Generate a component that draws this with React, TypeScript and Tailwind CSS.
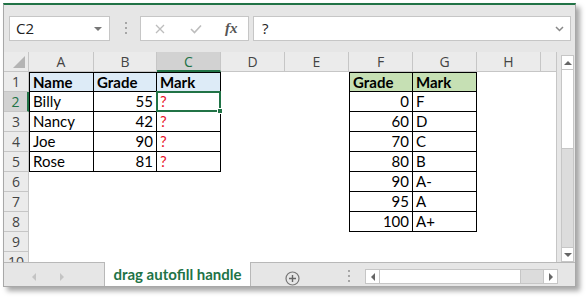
import React from 'react';

const cols = ['A', 'B', 'C', 'D', 'E', 'F', 'G', 'H', ''];

type Cell = { t: string; right?: boolean; bold?: boolean; bg?: string; red?: boolean };

const data: Record<string, Cell> = {
  A1: { t: 'Name', bold: true, bg: 'bg-[#ddebf7]' },
  B1: { t: 'Grade', bold: true, bg: 'bg-[#ddebf7]' },
  C1: { t: 'Mark', bold: true, bg: 'bg-[#ddebf7]' },
  A2: { t: 'Billy' }, B2: { t: '55', right: true }, C2: { t: '?', red: true },
  A3: { t: 'Nancy' }, B3: { t: '42', right: true }, C3: { t: '?', red: true },
  A4: { t: 'Joe' }, B4: { t: '90', right: true }, C4: { t: '?', red: true },
  A5: { t: 'Rose' }, B5: { t: '81', right: true }, C5: { t: '?', red: true },
  F1: { t: 'Grade', bold: true, bg: 'bg-[#c6e0b4]' },
  G1: { t: 'Mark', bold: true, bg: 'bg-[#c6e0b4]' },
  F2: { t: '0', right: true }, G2: { t: 'F' },
  F3: { t: '60', right: true }, G3: { t: 'D' },
  F4: { t: '70', right: true }, G4: { t: 'C' },
  F5: { t: '80', right: true }, G5: { t: 'B' },
  F6: { t: '90', right: true }, G6: { t: 'A-' },
  F7: { t: '95', right: true }, G7: { t: 'A' },
  F8: { t: '100', right: true }, G8: { t: 'A+' },
};

// cells inside a bordered block, and which edges need their own line
function blockBorders(col: string, row: number): string {
  const inLeft = ['A', 'B', 'C'].includes(col) && row <= 5;
  const inRight = ['F', 'G'].includes(col) && row <= 8;
  if (!inLeft && !inRight) return '';
  let c = 'border-black border-r border-b';
  if (row === 1) c += ' border-t';
  if (col === 'A' || col === 'F') c += ' border-l';
  return c;
}

function Grid() {
  const rows = [1, 2, 3, 4, 5, 6, 7, 8, 9, 10];
  return (
    <div className="grid w-[553px] grid-cols-[25px_65px_63px_64px_64px_64px_64px_64px_64px_16px] auto-rows-[20px] overflow-hidden h-[210px] font-['Lato',sans-serif] text-[15px]">
      {/* header row */}
      <div className="relative bg-[#ebebeb] border-r border-b border-[#c6c6c6]">
        <div className="absolute right-[3px] bottom-[3px] w-0 h-0 border-l-[12px] border-l-transparent border-b-[12px] border-b-[#b4b4b4]" />
      </div>
      {cols.map((c, i) => (
        <div
          key={'h' + i}
          className={
            c === 'C'
              ? 'flex items-center justify-center bg-[#d2d2d2] border-r border-[#c6c6c6] border-b-2 border-b-[#217346] text-[#217346] font-["Open_Sans",sans-serif] text-[14px]'
              : 'flex items-center justify-center bg-[#ebebeb] border-r border-b border-[#c6c6c6] text-[#444] font-["Open_Sans",sans-serif] text-[14px]'
          }
        >
          {c}
        </div>
      ))}
      {rows.map((r) => (
        <React.Fragment key={r}>
          <div
            className={
              r === 2
                ? 'flex items-center justify-center bg-[#d2d2d2] border-b border-[#c6c6c6] border-r-2 border-r-[#217346] text-[#217346] font-["Open_Sans",sans-serif] text-[14px]'
                : 'flex items-center justify-center bg-[#ebebeb] border-r border-b border-[#c6c6c6] text-[#444] font-["Open_Sans",sans-serif] text-[14px]'
            }
          >
            {r}
          </div>
          {cols.map((c, i) => {
            const key = c + r;
            const cell = c ? data[key] : undefined;
            const isLast = i === cols.length - 1;
            return (
              <div
                key={key + i}
                className={[
                  'relative flex items-center px-[3px] whitespace-nowrap',
                  key === 'C2' ? 'z-10' : '',
                  cell?.right ? 'justify-end' : 'justify-start',
                  cell?.bold ? 'font-bold' : '',
                  cell?.bg ?? 'bg-white',
                  cell?.red ? 'text-[#e8152b]' : 'text-black',
                  blockBorders(c, r),
                  isLast ? 'border-r border-[#c6c6c6]' : '',
                ].join(' ')}
              >
                {cell?.t}
                {key === 'C2' && (
                  <>
                    <div className="absolute -left-px -top-px -right-px -bottom-px border-2 border-[#217346]" />
                    <div className="absolute -right-[3px] -bottom-[3px] w-[6px] h-[6px] bg-[#217346] border border-white" />
                  </>
                )}
              </div>
            );
          })}
        </React.Fragment>
      ))}
    </div>
  );
}

function Tri({ dir, color = '#666' }: { dir: 'up' | 'down' | 'left' | 'right'; color?: string }) {
  const pts = {
    up: '0,5 4,1 8,5',
    down: '0,1 4,5 8,1',
    left: '5,0 1,4 5,8',
    right: '1,0 5,4 1,8',
  }[dir];
  const vert = dir === 'up' || dir === 'down';
  return (
    <svg width={vert ? 8 : 6} height={vert ? 6 : 8} viewBox={vert ? '0 0 8 6' : '0 0 6 8'}>
      <polygon points={pts} fill={color} />
    </svg>
  );
}

function Dots() {
  return (
    <div className="flex flex-col gap-[3px]">
      <div className="w-[2px] h-[2px] bg-[#a6a6a6]" />
      <div className="w-[2px] h-[2px] bg-[#a6a6a6]" />
      <div className="w-[2px] h-[2px] bg-[#a6a6a6]" />
    </div>
  );
}

export default function App() {
  return (
    <div className="w-[586px] h-[297px] bg-white pt-[3px] pl-[3px]">
      <div className="flex flex-col w-[573px] h-[284px] border border-[#a8a8a8] border-t-2 border-t-[#217346] bg-[#e6e6e6] shadow-[4px_4px_5px_rgba(0,0,0,0.35)] overflow-hidden">
        {/* formula bar */}
        <div className="flex items-start h-[47px] shrink-0 pt-[11px] pl-[5px] font-['Open_Sans',sans-serif]">
          <div className="flex items-center justify-between w-[101px] h-[25px] bg-white border border-[#c6c6c6] pl-[6px] pr-[7px] text-[15px] text-[#222]">
            <span>C2</span>
            <Tri dir="down" color="#777" />
          </div>
          <div className="ml-[15px] mt-[6px]">
            <Dots />
          </div>
          <div className="ml-[13px] flex items-center w-[109px] h-[25px] bg-white border border-[#c6c6c6]">
            <svg width="10" height="10" viewBox="0 0 10 10" className="ml-[14px]">
              <path d="M1 1L9 9M9 1L1 9" stroke="#bdbdbd" strokeWidth="1.3" />
            </svg>
            <svg width="12" height="10" viewBox="0 0 12 10" className="ml-[25px]">
              <path d="M1 5L4.5 8.5L11 1.5" stroke="#bdbdbd" strokeWidth="1.6" fill="none" />
            </svg>
            <span className="ml-[23px] font-['Liberation_Serif',serif] italic font-bold text-[15px] text-[#555]">fx</span>
          </div>
          <div className="ml-[4px] flex items-center justify-between w-[318px] h-[25px] bg-white border border-[#c6c6c6] pl-[8px] pr-[6px] text-[15px] text-[#222]">
            <span>?</span>
            <svg width="9" height="6" viewBox="0 0 9 6">
              <path d="M1 1L4.5 4.5L8 1" stroke="#888" strokeWidth="1.5" fill="none" />
            </svg>
          </div>
        </div>

        {/* grid + vertical scrollbar */}
        <div className="flex h-[210px] shrink-0">
          <Grid />
          <div className="flex-1 pt-[3px] pl-[4px] pr-[1px] flex flex-col">
            <div className="flex-1 flex flex-col bg-[#dcdcdc] border border-[#c6c6c6]">
              <div className="h-[14px] flex items-center justify-center bg-white border-b border-[#c6c6c6]">
                <Tri dir="up" color="#666" />
              </div>
              <div className="h-[79px] bg-white border-b border-[#c6c6c6]" />
              <div className="flex-1" />
              <div className="h-[14px] flex items-center justify-center bg-white border-t border-[#c6c6c6]">
                <Tri dir="down" color="#666" />
              </div>
            </div>
          </div>
        </div>

        {/* sheet tabs */}
        <div className="flex flex-1">
          <div className="w-[100px] border-t border-[#b8b8b8] flex items-start pt-[10px] pl-[27px] gap-[22px]">
            <Tri dir="left" color="#c4c4c4" />
            <Tri dir="right" color="#c4c4c4" />
          </div>
          <div className="w-[147px] bg-white border-l border-r border-[#b8b8b8] flex flex-col">
            <div className="flex-1 flex items-center justify-center font-['Lato',sans-serif] font-bold text-[15px] text-[#217346] pt-[1px]">
              drag autofill handle
            </div>
            <div className="h-[2px] bg-[#217346] mb-[1px]" />
          </div>
          <div className="flex-1 border-t border-[#b8b8b8] flex items-start">
            <svg width="15" height="15" viewBox="0 0 15 15" className="ml-[34px] mt-[8px]">
              <circle cx="7.5" cy="7.5" r="6.5" stroke="#777" strokeWidth="1.2" fill="none" />
              <path d="M7.5 4V11M4 7.5H11" stroke="#666" strokeWidth="1.4" />
            </svg>
            <div className="ml-[48px] mt-[7px]">
              <Dots />
            </div>
            <div className="ml-[15px] mt-[6px] flex w-[193px] h-[15px] bg-[#dcdcdc] border border-[#c6c6c6]">
              <div className="w-[14px] flex items-center justify-center bg-white border-r border-[#c6c6c6]">
                <Tri dir="left" color="#666" />
              </div>
              <div className="w-[141px] bg-white border-r border-[#c6c6c6]" />
              <div className="flex-1" />
              <div className="w-[14px] flex items-center justify-center bg-white border-l border-[#c6c6c6]">
                <Tri dir="right" color="#666" />
              </div>
            </div>
          </div>
        </div>
      </div>
    </div>
  );
}
